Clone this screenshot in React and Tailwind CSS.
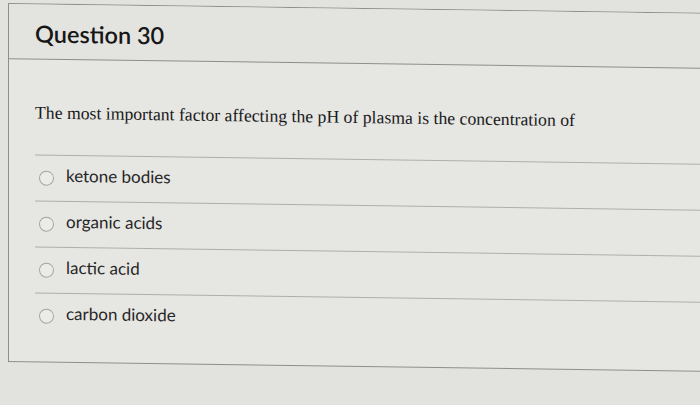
export default function App() {
  const options = ["ketone bodies", "organic acids", "lactic acid", "carbon dioxide"];
  return (
    <div className="w-[700px] h-[405px] overflow-hidden bg-[#e2e2df]">
      <div className="origin-top-left skew-y-[0.8deg] pt-[3px] pl-[8px]">
        <div className="w-[740px] border-l border-t border-b border-[#8e8e8b] bg-[#e6e6e3]">
          <div className="h-[55px] border-b border-[#8e8e8b] bg-[#e3e3e0] pt-[17px] pl-[26px]">
            <div
              className="text-[23.5px] leading-[24px] font-semibold text-[#161616]"
              style={{ fontFamily: "Lato, 'Noto Sans', sans-serif" }}
            >
              Question 30
            </div>
          </div>
          <div className="pt-[43px] pb-[23px] pl-[26px]">
            <div
              className="text-[17.7px] leading-[20px] text-[#1a1a1a]"
              style={{ fontFamily: "'Liberation Serif', 'Times New Roman', serif" }}
            >
              The most important factor affecting the pH of plasma is the concentration of
            </div>
            <div className="mt-[32px]">
              {options.map((o) => (
                <div
                  key={o}
                  className="h-[46px] border-t border-[#aeaeab] flex items-center pb-[1px]"
                >
                  <div className="ml-[4px] w-[15px] h-[15px] rounded-full border border-[#a3a3a0] bg-[#ebebe9] shrink-0" />
                  <div
                    className="ml-[12px] mb-[4px] text-[17px] leading-[20px] text-[#262626]"
                    style={{ fontFamily: "Lato, 'Noto Sans', sans-serif" }}
                  >
                    {o}
                  </div>
                </div>
              ))}
            </div>
          </div>
        </div>
      </div>
    </div>
  );
}
